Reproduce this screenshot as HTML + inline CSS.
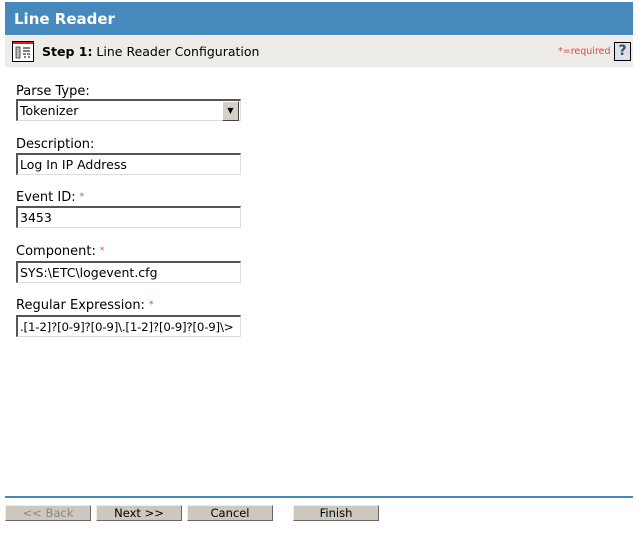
<html><head><style>
body{margin:0;width:638px;height:538px;background:#fff;font-family:"DejaVu Sans","Liberation Sans",sans-serif;position:relative;overflow:hidden}
.a{position:absolute}
.hdr{left:5px;top:2px;width:628px;height:33px;background:#4689bc;color:#fff;font-weight:bold;font-size:15px;line-height:34px;text-indent:9px}
.step{left:5px;top:36px;width:628px;height:31px;background:#eeece8;font-size:12.5px;line-height:31px}
.lbl{left:16px;font-size:13px;color:#000}
.req{color:#d44;font-size:9px;position:relative;top:-2px;margin-left:4px}
.inp{left:16px;width:220px;height:19px;border:2px solid;border-color:#555 #ddd #ddd #555;border-width:2px 1px 1px 2px;font-size:12.5px;line-height:20px;padding-left:2px;white-space:nowrap;overflow:hidden;background:#fff}
.btn{top:505px;height:14px;background:#ccc8c0;border:1px solid;border-color:#eee #666 #666 #eee;font-size:11.5px;text-align:center;line-height:14px}
</style></head><body>
<div class="a hdr">Line Reader</div>
<div class="a step">
<svg class="a" style="left:7px;top:5px" width="22" height="21" viewBox="0 0 22 21"><rect x="0.5" y="0.5" width="21" height="20" fill="#fff" stroke="#000"/><rect x="1" y="1" width="20" height="2" fill="#d22"/><rect x="4" y="6" width="4" height="11" fill="#bbb" stroke="#333" stroke-width="0.8"/><path d="M11 7h7M11 10h7M11 13h3M15 13h3M12 16h2M16 16h2" stroke="#333" stroke-width="1.3"/></svg>
<span class="a" style="left:37px"><b>Step 1:</b> Line Reader Configuration</span>
<span class="a" style="left:553px;font-size:9.5px;color:#d44">*=required</span>
<div class="a" style="left:609px;top:6px;width:15px;height:17px;border:1px solid #000;background:#dde;font-size:14px;line-height:17px;text-align:center;font-weight:bold;color:#355">?</div>
</div>
<div class="a lbl" style="top:84px">Parse Type:</div>
<div class="a inp" style="top:99px">Tokenizer</div>
<div class="a" style="left:222px;top:101px;width:15px;height:18px;background:#d4d0c8;border:1px solid;border-color:#fff #444 #444 #fff;font-size:8px;text-align:center;line-height:18px">▼</div>
<div class="a lbl" style="top:137px">Description:</div>
<div class="a inp" style="top:153px">Log In IP Address</div>
<div class="a lbl" style="top:190px">Event ID:<span class="req">*</span></div>
<div class="a inp" style="top:206px">3453</div>
<div class="a lbl" style="top:244px">Component:<span class="req">*</span></div>
<div class="a inp" style="top:261px">SYS:\ETC\logevent.cfg</div>
<div class="a lbl" style="top:298px">Regular Expression:<span class="req">*</span></div>
<div class="a inp" style="top:315px;font-size:11.8px;letter-spacing:-0.2px">.[1-2]?[0-9]?[0-9]\.[1-2]?[0-9]?[0-9]\&gt;</div>
<div class="a" style="left:5px;top:496px;width:628px;height:2px;background:#4689bc"></div>
<div class="a btn" style="left:5px;width:84px;color:#888">&lt;&lt; Back</div>
<div class="a btn" style="left:96px;width:84px">Next &gt;&gt;</div>
<div class="a btn" style="left:187px;width:84px">Cancel</div>
<div class="a btn" style="left:293px;width:84px">Finish</div>
</body></html>
